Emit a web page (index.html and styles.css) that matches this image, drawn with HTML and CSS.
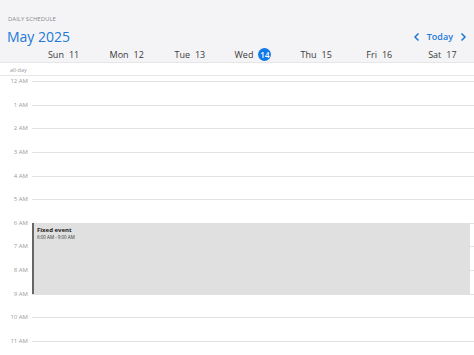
FILE: index.html
```html
<!DOCTYPE html>
<html lang="en">
<head>
  <meta charset="UTF-8">
  <meta name="viewport" content="width=device-width, initial-scale=1.0">
  <title>Daily Schedule</title>
  <link rel="stylesheet" href="styles.css">
</head>
<body>
  <div class="top">
    <div class="caption">DAILY SCHEDULE</div>
    <div class="month-row">
      <span class="month">May 2025</span>
      <div class="nav">
        <svg width="8" height="10" viewBox="0 0 8 10"><path d="M5.5 1.5 L2 5 L5.5 8.5" fill="none" stroke="#1f78d1" stroke-width="1.5"/></svg>
        <span class="today">Today</span>
        <svg width="8" height="10" viewBox="0 0 8 10"><path d="M2.5 1.5 L6 5 L2.5 8.5" fill="none" stroke="#1f78d1" stroke-width="1.5"/></svg>
      </div>
    </div>
    <div class="days">
      <div class="gutter"></div>
      <div class="day">Sun <span class="num">11</span></div>
      <div class="day">Mon <span class="num">12</span></div>
      <div class="day">Tue <span class="num">13</span></div>
      <div class="day">Wed <span class="num current">14</span></div>
      <div class="day">Thu <span class="num">15</span></div>
      <div class="day">Fri <span class="num">16</span></div>
      <div class="day">Sat <span class="num">17</span></div>
    </div>
  </div>
  <div class="allday">all-day</div>
  <div class="grid">
    <div class="hour"><span class="label">12 AM</span><span class="line"></span></div>
    <div class="hour"><span class="label">1 AM</span><span class="line"></span></div>
    <div class="hour"><span class="label">2 AM</span><span class="line"></span></div>
    <div class="hour"><span class="label">3 AM</span><span class="line"></span></div>
    <div class="hour"><span class="label">4 AM</span><span class="line"></span></div>
    <div class="hour"><span class="label">5 AM</span><span class="line"></span></div>
    <div class="hour"><span class="label">6 AM</span><span class="line"></span></div>
    <div class="hour"><span class="label">7 AM</span><span class="line"></span></div>
    <div class="hour"><span class="label">8 AM</span><span class="line"></span></div>
    <div class="hour"><span class="label">9 AM</span><span class="line"></span></div>
    <div class="hour"><span class="label">10 AM</span><span class="line"></span></div>
    <div class="hour"><span class="label">11 AM</span><span class="line"></span></div>
    <div class="event">
      <div class="event-title">Fixed event</div>
      <div class="event-time">6:00 AM - 9:00 AM</div>
    </div>
  </div>
</body>
</html>
```

FILE: styles.css
```css
html, body {
  margin: 0;
  height: 100%;
  overflow: hidden;
}

body {
  font-family: "Open Sans", "Noto Sans", Arial, sans-serif;
  background: #fff;
  color: #333;
}

.top {
  background: #f4f4f6;
  height: 62px;
  display: flex;
  flex-direction: column;
}

.caption {
  font-size: 6px;
  color: #8a8a8e;
  padding: 15px 0 0 8px;
  height: 10px;
  line-height: 8px;
}

.month-row {
  display: flex;
  align-items: center;
  justify-content: space-between;
  padding: 1px 7px 0 7px;
  height: 21px;
}

.month {
  font-size: 14px;
  color: #2379d6;
  line-height: 20px;
}

.nav {
  display: flex;
  align-items: center;
  gap: 3px;
}

.nav svg { display: block; }

.today {
  font-size: 9px;
  font-weight: 600;
  color: #2379d6;
  padding: 0 3px;
}

.days {
  display: flex;
  align-items: center;
  height: 14px;
  font-size: 9px;
  color: #3a3a3a;
}

.gutter { width: 32px; }

.day {
  flex: 1;
  display: flex;
  justify-content: center;
  align-items: center;
  gap: 5px;
}

.num.current {
  background: #1279e8;
  color: #fff;
  width: 13px;
  height: 13px;
  border-radius: 50%;
  display: flex;
  align-items: center;
  justify-content: center;
  font-size: 8px;
  font-weight: 600;
}

.allday {
  height: 12px;
  font-size: 5.5px;
  color: #999;
  padding-left: 10px;
  line-height: 14px;
  border-top: 1px solid #e6e6e6;
  border-bottom: 1px solid #e6e6e6;
}

.grid {
  position: relative;
  padding-top: 5px;
}

.hour {
  display: flex;
  height: 23.64px;
}

.label {
  width: 28px;
  text-align: right;
  font-size: 6px;
  color: #9a9a9a;
  line-height: 10px;
  margin-top: -5px;
  height: 10px;
}

.line {
  flex: 1;
  border-top: 1px solid #e2e2e2;
  margin-left: 4px;
}

.event {
  position: absolute;
  top: 146.8px;
  left: 32px;
  right: 4px;
  height: 70.9px;
  background: #e0e0e0;
  border-left: 2px solid #666;
  padding: 3px 3px;
  box-sizing: border-box;
}

.event-title {
  font-size: 6px;
  font-weight: 700;
  color: #222;
  line-height: 8px;
}

.event-time {
  font-size: 4.5px;
  color: #333;
  line-height: 7px;
}
```
